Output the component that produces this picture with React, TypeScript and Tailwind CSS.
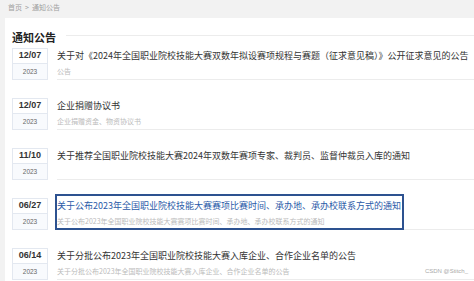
import React from "react";

type Item = { md: string; y: string; title: string; sub?: string; active?: boolean };

const items: Item[] = [
  {
    md: "12/07",
    y: "2023",
    title:
      "关于对《2024年全国职业院校技能大赛双数年拟设赛项规程与赛题（征求意见稿）》公开征求意见的公告",
    sub: "公告",
  },
  { md: "12/07", y: "2023", title: "企业捐赠协议书", sub: "企业捐赠资金、物资协议书" },
  {
    md: "11/10",
    y: "2023",
    title: "关于推荐全国职业院校技能大赛2024年双数年赛项专家、裁判员、监督仲裁员入库的通知",
  },
  {
    md: "06/27",
    y: "2023",
    title: "关于公布2023年全国职业院校技能大赛赛项比赛时间、承办地、承办校联系方式的通知",
    sub: "关于公布2023年全国职业院校技能大赛赛项比赛时间、承办地、承办校联系方式的通知",
    active: true,
  },
  {
    md: "06/14",
    y: "2023",
    title: "关于分批公布2023年全国职业院校技能大赛入库企业、合作企业名单的公告",
    sub: "关于分批公布2023年全国职业院校技能大赛入库企业、合作企业名单的公告",
  },
];

const font = { fontFamily: '"Noto Sans CJK SC", "Noto Sans", sans-serif' };

export default function App() {
  return (
    <div
      className="w-[474px] h-[281px] overflow-hidden bg-[#f2f2f2] relative"
      style={font}
    >
      <div className="h-[18px] flex items-start pl-[8px] pt-[2px] text-[7px] leading-[10px] text-[#a0a0a0] gap-[3px]">
        <span>首页</span>
        <span>&gt;</span>
        <span>通知公告</span>
      </div>
      <div className="ml-[5px] bg-white h-[263px] pt-[9px] pl-[7px]">
        <div className="flex items-center h-[20px]">
          <div className="text-[11px] leading-[20px] font-bold text-[#222]">通知公告</div>
          <div className="flex-1 h-px bg-[#ececec] ml-[10px] -mt-[4px]" />
        </div>
        <div className="flex flex-col gap-[18px] mt-[1px]">
          {items.map((it, i) => (
            <div key={i} className="flex h-[32px]">
              <div className="w-[36px] h-[32px] border border-[#e3e8f0] flex flex-col shrink-0">
                <div
                  className="h-[15px] flex items-center justify-center text-[9px] font-bold text-[#333] border-b border-[#e3e8f0]"
                  style={{ fontFamily: '"Liberation Sans", Arial, sans-serif' }}
                >
                  {it.md}
                </div>
                <div
                  className="flex-1 flex items-center justify-center text-[6.5px] text-[#666] bg-[#f8fafd]"
                  style={{ fontFamily: '"Liberation Sans", Arial, sans-serif' }}
                >
                  {it.y}
                </div>
              </div>
              <div className="flex-1 ml-[9px] border-b border-[#ececec] pt-[2px] relative">
                <div
                  className={
                    "text-[9px] leading-[12px] whitespace-nowrap " +
                    (it.active ? "text-[#2a5aa8]" : "text-[#333]")
                  }
                >
                  {it.title}
                </div>
                {it.sub && (
                  <div className="text-[7px] leading-[10px] mt-[4px] text-[#bbbbbb] whitespace-nowrap">
                    {it.sub}
                  </div>
                )}
                {it.active && (
                  <div className="absolute left-[-2px] top-[-4px] w-[349px] h-[36px] border-2 border-[#2d5290]" />
                )}
              </div>
            </div>
          ))}
        </div>
      </div>
      <div
        className="absolute right-[6px] bottom-[5px] text-[6px] text-[#aaa]"
        style={{ fontFamily: '"Liberation Sans", Arial, sans-serif' }}
      >
        CSDN @Stitch_
      </div>
    </div>
  );
}
